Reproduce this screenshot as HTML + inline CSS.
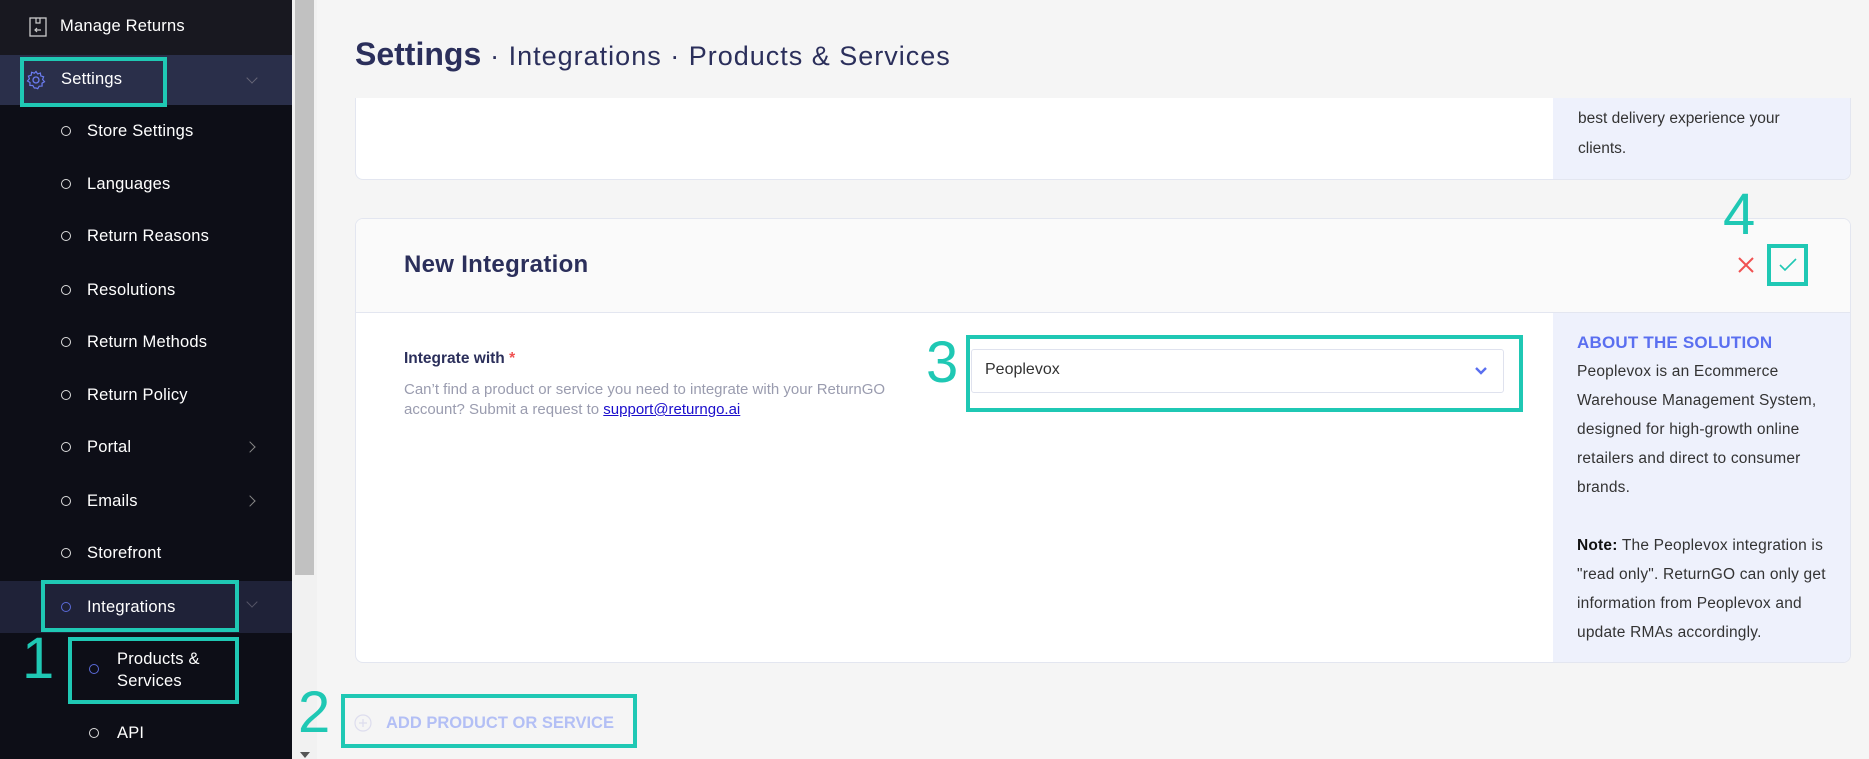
<!DOCTYPE html>
<html><head><meta charset="utf-8"><style>
*{margin:0;padding:0;box-sizing:border-box}
body{width:1869px;height:759px;overflow:hidden;background:#f5f5f5;font-family:"Liberation Sans",sans-serif;position:relative}
.a{position:absolute;white-space:nowrap}
.sb{position:absolute;left:0;top:0;width:292px;height:759px;background:#0d0e17}
.it{position:absolute;color:#fff;font-size:16.5px;left:87px;letter-spacing:0.2px}
.bl{position:absolute;width:10px;height:10px;border:1.5px solid #ddd;border-radius:50%}
.tl{border:4px solid #1fc8b4;position:absolute}
.num{position:absolute;color:#1fc8b4;font-size:58px;line-height:1}
.chev{position:absolute;width:8px;height:8px;border-right:1.5px solid #888;border-bottom:1.5px solid #888}
.rp{position:absolute;left:1577px;font-size:15.5px;color:#333;letter-spacing:0.2px}
</style></head><body>
<div class="sb">
  <div style="position:absolute;left:0;top:0;width:292px;height:55px;background:#181820"></div>
  <svg class="a" style="left:29px;top:17px" width="18" height="20" viewBox="0 0 18 20"><rect x="1" y="1" width="16" height="18" fill="none" stroke="#ccc" stroke-width="1.3"/><path d="M7 1v5h4V1" fill="none" stroke="#ccc" stroke-width="1.2"/><path d="M12 13H6M8 11l-2 2 2 2" fill="none" stroke="#ccc" stroke-width="1.2"/></svg>
  <div class="it" style="left:60px;top:17px">Manage Returns</div>
  <div style="position:absolute;left:0;top:55px;width:292px;height:50px;background:#2a2f4a"></div>
  <svg class="a" style="left:26px;top:70px" width="20" height="20" viewBox="0 0 20 20"><circle cx="10" cy="10" r="3" fill="none" stroke="#6b7cf0" stroke-width="1.3"/><path d="M10 1.5l1.6 2.4 2.8-.9.4 2.9 2.8.9-1 2.7 1.9 2.2-2.5 1.5.1 2.9-2.9.1-1.5 2.5L10 18l-1.7 0-1.5-2.5-2.9-.1.1-2.9-2.5-1.5 1.9-2.2-1-2.7 2.8-.9.4-2.9 2.8.9z" fill="none" stroke="#6b7cf0" stroke-width="1.2"/></svg>
  <div class="it" style="left:61px;top:70px">Settings</div>
  <div class="chev" style="left:248px;top:74px;transform:rotate(45deg);border-color:#667"></div>
  <div class="tl" style="left:20px;top:57px;width:147px;height:50px"></div>

  <div class="bl" style="left:61px;top:126px"></div><div class="it" style="top:122px">Store Settings</div>
  <div class="bl" style="left:61px;top:179px"></div><div class="it" style="top:175px">Languages</div>
  <div class="bl" style="left:61px;top:231px"></div><div class="it" style="top:227px">Return Reasons</div>
  <div class="bl" style="left:61px;top:285px"></div><div class="it" style="top:281px">Resolutions</div>
  <div class="bl" style="left:61px;top:337px"></div><div class="it" style="top:333px">Return Methods</div>
  <div class="bl" style="left:61px;top:390px"></div><div class="it" style="top:386px">Return Policy</div>
  <div class="bl" style="left:61px;top:442px"></div><div class="it" style="top:438px">Portal</div>
  <div class="chev" style="left:246px;top:443px;transform:rotate(-45deg)"></div>
  <div class="bl" style="left:61px;top:496px"></div><div class="it" style="top:492px">Emails</div>
  <div class="chev" style="left:246px;top:497px;transform:rotate(-45deg)"></div>
  <div class="bl" style="left:61px;top:548px"></div><div class="it" style="top:544px">Storefront</div>
  <div style="position:absolute;left:0;top:581px;width:292px;height:52px;background:#1f2238"></div>
  <div class="bl" style="left:61px;top:602px;border-color:#5a6ad8"></div><div class="it" style="top:598px">Integrations</div>
  <div class="chev" style="left:248px;top:598px;transform:rotate(45deg);border-color:#556"></div>
  <div class="tl" style="left:41px;top:580px;width:198px;height:52px"></div>
  <div class="bl" style="left:89px;top:664px;border-color:#5a6ad8"></div>
  <div class="it" style="left:117px;top:650px">Products &amp;</div>
  <div class="it" style="left:117px;top:672px">Services</div>
  <div class="tl" style="left:68px;top:637px;width:171px;height:67px"></div>
  <div class="bl" style="left:89px;top:728px"></div><div class="it" style="left:117px;top:724px">API</div>
  <div class="num" style="left:22px;top:630px">1</div>
</div>
<div class="a" style="left:292px;top:0;width:25px;height:759px;background:#f1f1f1"></div>
<div class="a" style="left:295px;top:0;width:19px;height:575px;background:#c1c1c1"></div>
<div class="a" style="left:300px;top:752px;border:5px solid transparent;border-top:6px solid #555;border-bottom:0"></div>

<div class="a" style="left:355px;top:36px;font-size:32px;font-weight:bold;color:#2b2f5b">Settings <span style="font-weight:normal;font-size:27px;letter-spacing:1px">· Integrations · Products &amp; Services</span></div>

<div class="a" style="left:355px;top:98px;width:1496px;height:82px;background:#fff;border:1px solid #e3e6f0;border-top:0;border-radius:0 0 8px 8px;overflow:hidden">
  <div style="position:absolute;left:1197px;top:0;width:300px;height:82px;background:#eef1fc"></div>
  <div class="a" style="left:1222px;top:12px;font-size:15.5px;color:#333">best delivery experience your</div>
  <div class="a" style="left:1222px;top:42px;font-size:15.5px;color:#333">clients.</div>
</div>

<div class="a" style="left:355px;top:218px;width:1496px;height:445px;background:#fff;border:1px solid #e3e6f0;border-radius:8px;overflow:hidden">
  <div style="position:absolute;left:0;top:0;width:1496px;height:94px;background:#fafafa;border-bottom:1px solid #e3e6f0"></div>
  <div style="position:absolute;left:1197px;top:94px;width:300px;height:351px;background:#eef1fc"></div>
</div>
<div class="a" style="left:404px;top:251px;font-size:24px;font-weight:bold;color:#2b2f5b;letter-spacing:0.3px">New Integration</div>
<svg class="a" style="left:1738px;top:257px" width="16" height="16" viewBox="0 0 16 16"><path d="M1 1L15 15M15 1L1 15" stroke="#f05252" stroke-width="2"/></svg>
<div class="tl" style="left:1767px;top:244px;width:41px;height:42px"></div>
<svg class="a" style="left:1778px;top:257px" width="20" height="16" viewBox="0 0 20 16"><path d="M2 8l5 5L18 2" fill="none" stroke="#1fc8b4" stroke-width="1.6"/></svg>
<div class="num" style="left:1723px;top:186px">4</div>

<div class="a" style="left:404px;top:350px;font-size:15.5px;font-weight:bold;color:#2b2f5b">Integrate with <span style="color:#f05252">*</span></div>
<div class="a" style="left:404px;top:380px;font-size:15px;color:#9a9caf;line-height:20px">Can’t find a product or service you need to integrate with your ReturnGO<br>account? Submit a request to <span style="color:#1a0dcc;text-decoration:underline">support@returngo.ai</span></div>

<div class="a" style="left:971px;top:349px;width:533px;height:44px;background:#fff;border:1px solid #dfe2ee;border-radius:3px"></div>
<div class="a" style="left:985px;top:361px;font-size:16px;color:#333">Peoplevox</div>
<svg class="a" style="left:1474px;top:366px" width="14" height="10" viewBox="0 0 14 10"><path d="M2 2l5 5 5-5" fill="none" stroke="#5a6ff0" stroke-width="2.4"/></svg>
<div class="tl" style="left:966px;top:335px;width:557px;height:77px"></div>
<div class="num" style="left:926px;top:334px">3</div>

<div class="rp" style="top:333px;font-weight:bold;color:#5a6ff0;font-size:17px">ABOUT THE SOLUTION</div>
<div class="rp" style="top:363px">Peoplevox is an Ecommerce</div>
<div class="rp" style="top:392px">Warehouse Management System,</div>
<div class="rp" style="top:421px">designed for high-growth online</div>
<div class="rp" style="top:450px">retailers and direct to consumer</div>
<div class="rp" style="top:479px">brands.</div>
<div class="rp" style="top:537px"><b style="color:#111">Note:</b> The Peoplevox integration is</div>
<div class="rp" style="top:566px">"read only". ReturnGO can only get</div>
<div class="rp" style="top:595px">information from Peoplevox and</div>
<div class="rp" style="top:624px">update RMAs accordingly.</div>

<div class="tl" style="left:341px;top:694px;width:296px;height:54px"></div>
<div class="num" style="left:298px;top:684px">2</div>
<svg class="a" style="left:354px;top:714px" width="18" height="18" viewBox="0 0 18 18"><circle cx="9" cy="9" r="8" fill="none" stroke="#dde" stroke-width="1.2"/><path d="M9 5v8M5 9h8" stroke="#dde" stroke-width="1.2"/></svg>
<div class="a" style="left:386px;top:714px;font-size:16.5px;font-weight:bold;color:#b3bff5">ADD PRODUCT OR SERVICE</div>
</body></html>
